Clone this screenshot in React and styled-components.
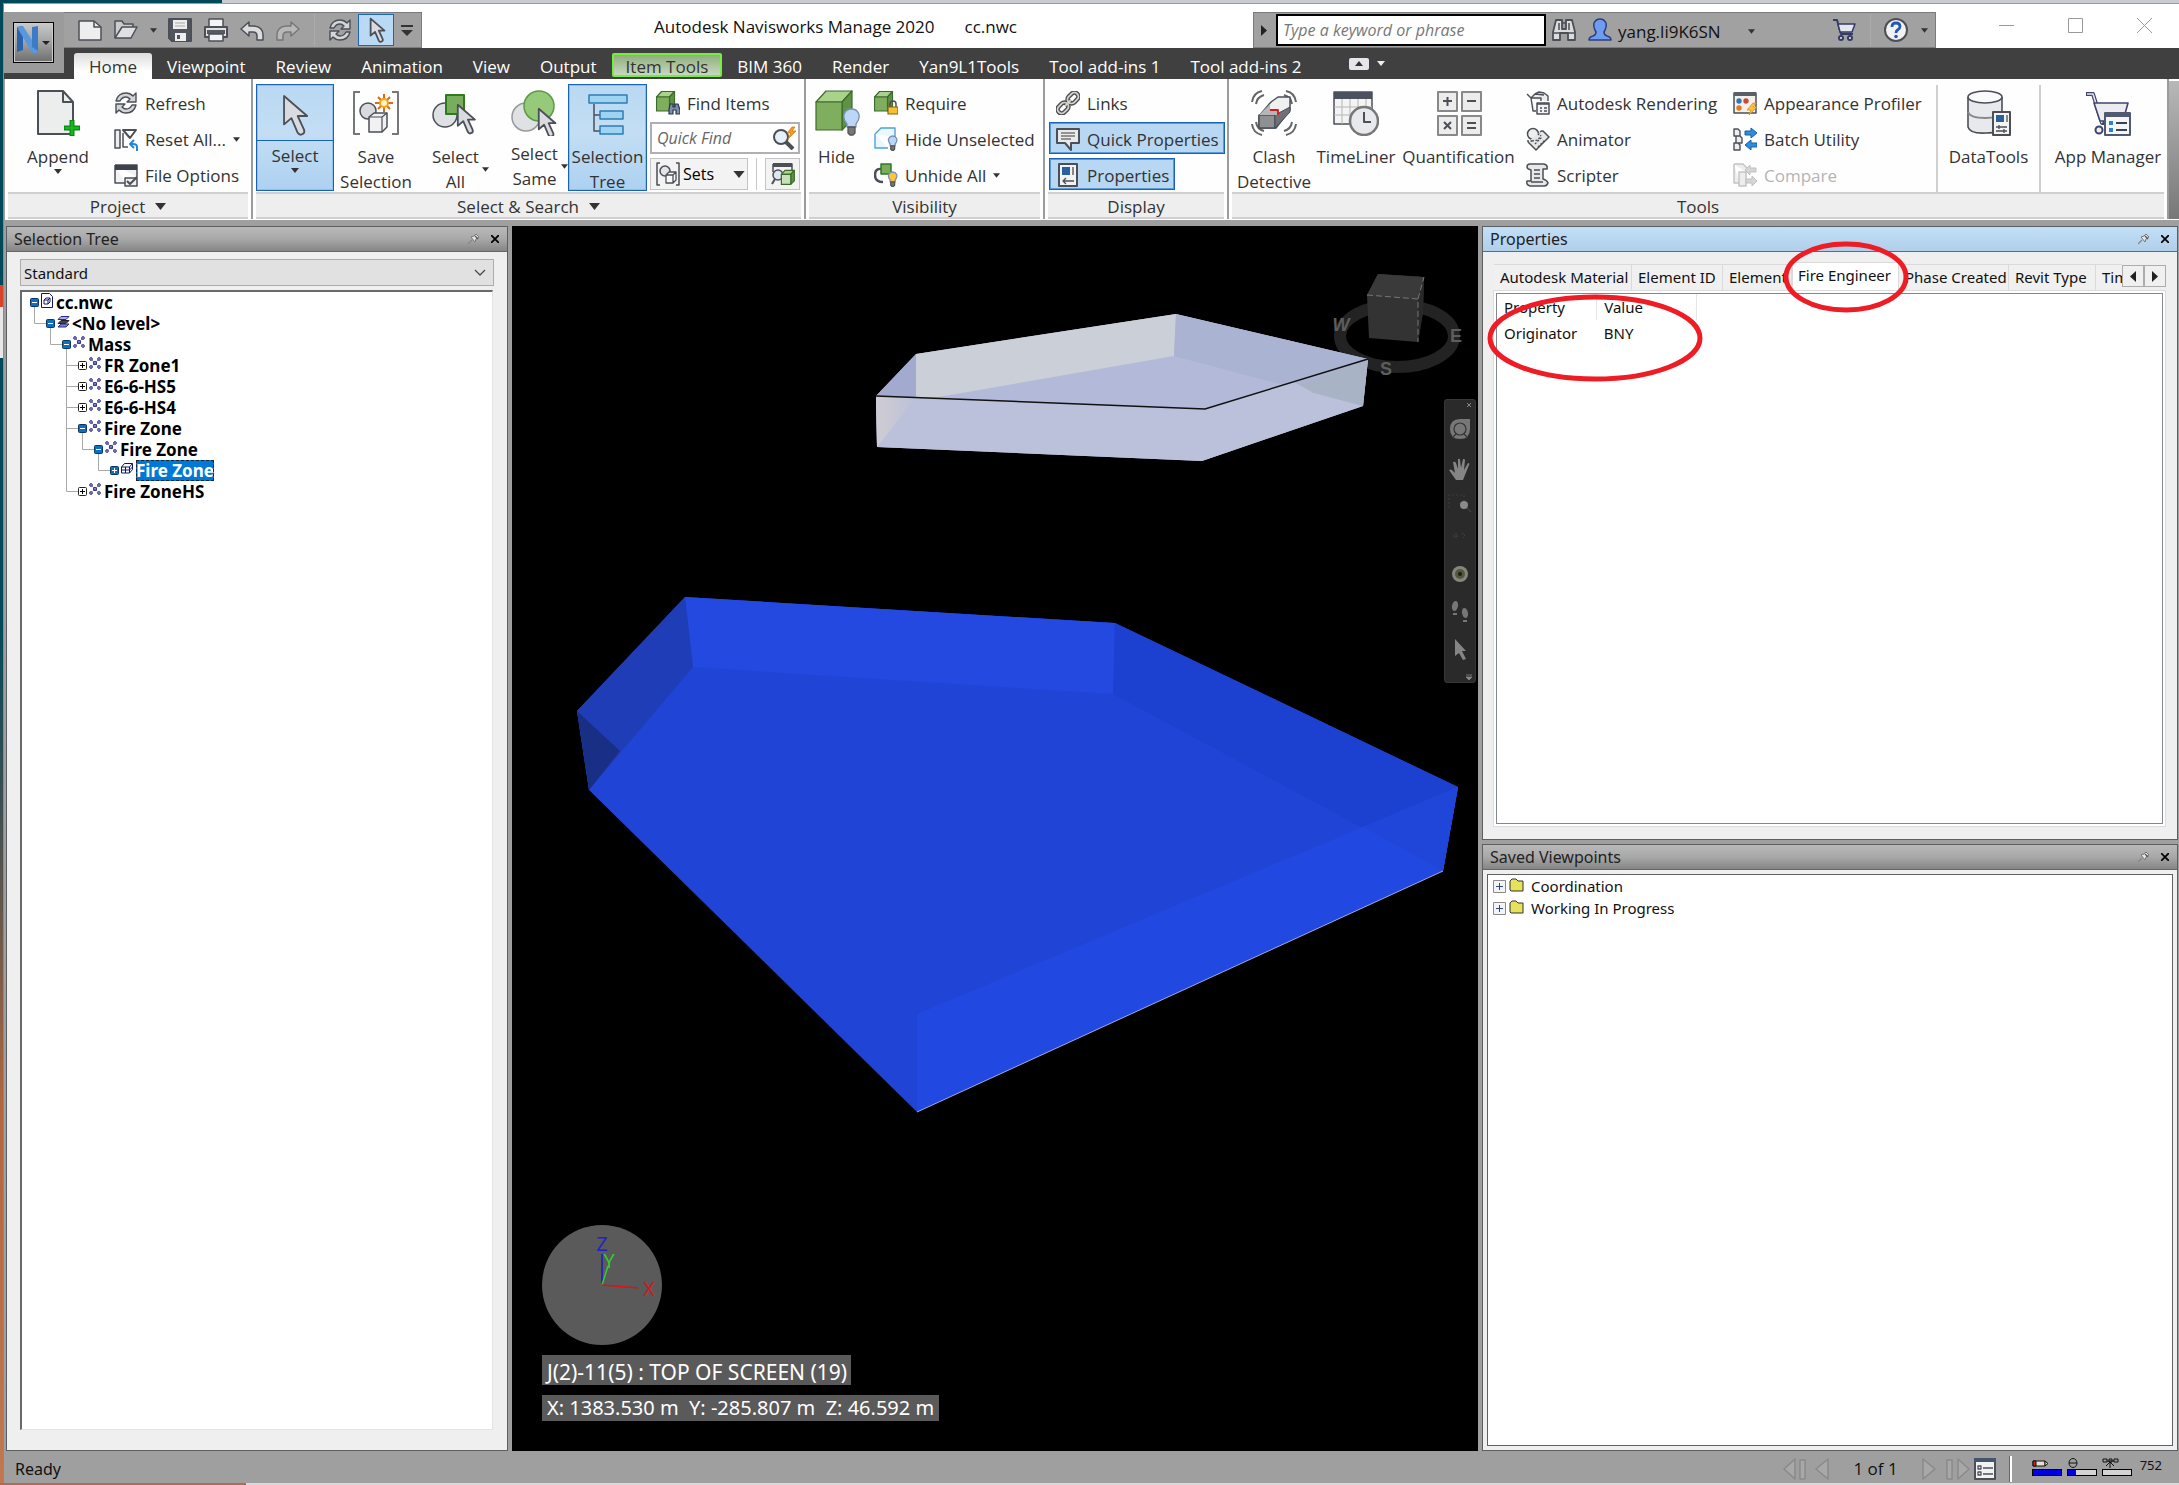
import React from 'react';
import styled, { createGlobalStyle, css } from 'styled-components';

const GlobalStyle = createGlobalStyle`
  * {
    box-sizing: border-box;
  }
  body {
    margin: 0;
    background: #9f9f9f;
    overflow: hidden;
  }
  button, input, select {
    font: inherit;
    color: inherit;
  }
  button {
    padding: 0;
    border: none;
    background: none;
    cursor: pointer;
  }
  svg {
    display: block;
    flex: none;
  }
`;

const uiFont = '"Open Sans", "Noto Sans", sans-serif';
const panelFont = '"Noto Sans", "Open Sans", sans-serif';

/* ---------- window ---------- */

const Desktop = styled.div`
  display: flex;
  flex-direction: column;
  height: 100vh;
  padding: 0 0 2px 3px;
  background:
    linear-gradient(90deg, #00495a 0 222px, #c9cdd2 222px) top / 100% 3px no-repeat,
    linear-gradient(90deg, #b06c50 0 246px, #dadada 246px) bottom / 100% 2px no-repeat,
    linear-gradient(180deg, #00495a 0 285px, #d8432a 285px 307px, #e8e8e8 307px 358px, #00495a 358px 620px, #3a4f52 800px, #b0663f 1100px, #c07850) left / 3px 100% no-repeat;
  font-family: ${uiFont};
  font-size: 17px;
  color: #333;
`;

const Window = styled.div`
  flex: 1;
  min-height: 0;
  display: flex;
  flex-direction: column;
  margin-top: 3px;
  border-top: 1px solid #9a9a9a;
  border-left: 1px solid #8a8a8a;
  background: #9f9f9f;
`;

const Header = styled.header`
  flex: none;
  display: grid;
  grid-template-columns: 60px 1fr;
  grid-template-rows: 44px 31px;
  background: linear-gradient(#fff 44px, #404040 44px);
`;

const AppCorner = styled.div`
  grid-row: 1 / 3;
  display: flex;
  align-items: center;
  justify-content: center;
  margin: 8px 0 6px;
  padding-right: 2px;
  background: #9b9b9b;
`;

const AppButton = styled.button`
  display: flex;
  align-items: flex-start;
  justify-content: center;
  width: 41px;
  height: 41px;
  padding-top: 2px;
  border: 1px solid #000;
  background: linear-gradient(#c9c9c9, #a2a2a2 50%, #6e6e6e);
  box-shadow: inset 0 0 0 1px #ccc;
`;

const TitleRow = styled.div`
  display: flex;
  align-items: stretch;
`;

const ToolStrip = styled.div`
  display: flex;
  align-items: stretch;
  margin-top: 8px;
  border: 1px solid #7b7b7b;
  border-left-width: ${(p) => (p.$open ? 0 : '1px')};
  background: #a1a1a1;
  padding: 1px 1px 1px ${(p) => (p.$open ? '8px' : 0)};
`;

const IconButton = styled.button`
  display: flex;
  align-items: center;
  justify-content: center;
  width: ${(p) => p.$w || 36}px;
  ${(p) =>
    p.$active &&
    css`
      border: 1px solid #1a66b8;
      background: #b9d9f5;
    `}
`;

const ThinSep = styled.span`
  width: 16px;
  background: linear-gradient(90deg, transparent 8px, #acacac 8px 9px, transparent 9px);
`;

const Title = styled.h1`
  flex: 1;
  display: flex;
  justify-content: center;
  gap: 30px;
  margin: 0;
  padding-right: 4px;
  font-size: 17px;
  font-weight: 400;
  line-height: 46px;
  color: #111;
  white-space: nowrap;
`;

const SearchInput = styled.input`
  width: 270px;
  margin: 0 0 0 3px;
  padding: 0 5px;
  border: 2px solid #000;
  border-radius: 0;
  background: #fff;
  font-size: 16px;
  font-style: italic;
  outline: none;
  &::placeholder {
    color: #777;
    opacity: 1;
  }
`;

const UserButton = styled.button`
  display: flex;
  align-items: center;
  justify-content: space-between;
  width: 142px;
  padding: 2px 5px 0 0;
  color: #111;
`;

const Spacer = styled.span`
  flex: ${(p) => (p.$w ? `0 0 ${p.$w}px` : 1)};
`;

const WindowControls = styled.div`
  display: flex;
  margin-left: 36px;
`;

const WinButton = styled.button`
  display: flex;
  align-items: center;
  justify-content: center;
  width: 69px;
`;

const TabRow = styled.nav`
  display: flex;
  align-items: flex-end;
  padding-left: 10px;
`;

const RibbonTab = styled.button`
  height: 26px;
  padding: 0 15px;
  color: #fff;
  line-height: 28px;
  white-space: nowrap;
  ${(p) =>
    p.$active &&
    css`
      border-radius: 3px 3px 0 0;
      background: linear-gradient(#dcdcdc, #fff 70%);
      color: #333;
    `}
  ${(p) =>
    p.$context &&
    css`
      height: 24px;
      line-height: 24px;
      margin-bottom: 2px;
      padding: 0 12px;
      border: 2px solid #76ee3f;
      border-radius: 2px;
      background: linear-gradient(#8fae7d, #c8d8be);
      color: #333;
    `}
`;

const MinimizeRibbon = styled.button`
  display: flex;
  align-items: center;
  gap: 8px;
  align-self: center;
  margin: 0 0 0 32px;
`;

/* ---------- ribbon ---------- */

const Ribbon = styled.section`
  flex: none;
  display: flex;
  height: 141px;
  margin-left: 1px;
  padding-bottom: 1px;
  background: #fefefe;
`;

const Group = styled.div`
  flex: ${(p) => (p.$w ? `0 0 ${p.$w}px` : '1 1 0')};
  min-width: 0;
  display: flex;
  flex-direction: column;
  border-right: 2px solid #9b9b9b;
`;

const GroupBody = styled.div`
  display: flex;
  height: 113px;
  padding: 5px 0 0 ${(p) => p.$pad || 0}px;
  > * {
    flex-shrink: 0;
  }
`;

const GroupTitle = styled.div`
  display: flex;
  align-items: center;
  justify-content: center;
  gap: 10px;
  height: 27px;
  margin: 0 3px;
  padding-top: 2px;
  border-top: 2px solid #cfcfcf;
  border-bottom: 2px solid #cfcfcf;
  background: #eee;
`;

const BigButton = styled.button`
  display: flex;
  flex-direction: column;
  align-items: ${(p) => (p.$left ? 'flex-start' : 'center')};
  width: ${(p) => p.$w}px;
  height: 107px;
  padding: ${(p) => (p.$active ? 5 : 6)}px 0 0 ${(p) => p.$left || 0}px;
  white-space: nowrap;
  ${(p) =>
    p.$active &&
    css`
      border: 1px solid #1a62b3;
      box-shadow: inset 0 0 0 1px #8fbfea;
      background: linear-gradient(#b9d8f2, #c3def4 45%, #add1f1);
    `}
`;

const IconBox = styled.span`
  display: flex;
  align-items: center;
  justify-content: center;
  width: ${(p) => (p.$split ? '100%' : '46px')};
  height: ${(p) => (p.$split ? 51 : 46)}px;
  margin-bottom: ${(p) => (p.$split ? 2 : p.$tight ? 5 : 8)}px;
  border-bottom: ${(p) => (p.$split ? '1px solid #1a62b3' : 'none')};
`;

const LabelRow = styled.span`
  display: flex;
  align-items: center;
  gap: 3px;
`;

const Label = styled.span`
  line-height: 25px;
  text-align: center;
`;

const SmallColumn = styled.div`
  display: flex;
  flex-direction: column;
  align-items: flex-start;
  gap: 4px;
  width: ${(p) => (p.$w ? `${p.$w}px` : 'auto')};
  padding-top: 2px;
`;

const SmallButton = styled.button`
  display: flex;
  align-items: center;
  gap: 7px;
  height: 32px;
  padding: 2px 5px 0 6px;
  border: 1px solid transparent;
  white-space: nowrap;
  color: ${(p) => (p.$dim ? '#b4b4b4' : 'inherit')};
  ${(p) =>
    p.$active &&
    css`
      border-color: #1a62b3;
      box-shadow: inset 0 0 0 1px #5b9bd8;
      background: #b7d7f3;
    `}
`;

const QuickFind = styled.label`
  display: flex;
  align-items: center;
  width: 150px;
  height: 32px;
  margin-left: 1px;
  padding: 0 2px 0 5px;
  border: 2px solid #aeb0b5;
  background: #fff;
  input {
    flex: 1;
    min-width: 0;
    padding: 0;
    border: none;
    outline: none;
    font-size: 16px;
    font-style: italic;
  }
  input::placeholder {
    color: #666;
    opacity: 1;
  }
`;

const SetsRow = styled.div`
  display: flex;
  align-items: center;
  margin-left: 1px;
  height: 32px;
`;

const SetsButton = styled.button`
  display: flex;
  align-items: center;
  gap: 3px;
  width: 98px;
  height: 32px;
  padding: 0 2px 0 5px;
  border: 1px solid #c4c4c4;
  background: #f3f3f3;
  font-size: 16px;
  color: #000;
`;

const SetsSep = styled.span`
  width: 1px;
  height: 32px;
  margin: 0 8px;
  background: #c8c8c8;
`;

const BoxButton = styled.button`
  display: flex;
  align-items: center;
  justify-content: center;
  width: 35px;
  height: 32px;
  border: 1px solid #c4c4c4;
  background: #f3f3f3;
`;

const ToolSep = styled.span`
  width: 2px;
  height: 107px;
  margin-top: 1px;
  background: #d0d0d0;
`;

const RibbonScroll = styled.div`
  width: 10px;
  margin-top: 2px;
  background: linear-gradient(#b8b8b8, #777);
`;

/* ---------- docked panels ---------- */

const Workspace = styled.main`
  flex: 1;
  min-height: 0;
  display: grid;
  grid-template-columns: 502px minmax(0, 1fr) 696px;
  gap: 4px;
  padding: 6px 1px 0 2px;
`;

const RightDock = styled.div`
  display: flex;
  flex-direction: column;
  gap: 4px;
  min-height: 0;
`;

const Panel = styled.section`
  position: relative;
  flex: ${(p) => p.$flex || '1 1 0'};
  min-height: 0;
  display: flex;
  flex-direction: column;
  border: 1px solid #5c5f61;
  background: #efefef;
  font-family: ${panelFont};
  font-size: 15px;
  color: #111;
`;

const PanelHeader = styled.header`
  flex: none;
  display: flex;
  align-items: center;
  gap: 12px;
  height: 25px;
  padding: 0 8px 0 7px;
  border-bottom: 1px solid ${(p) => (p.$active ? '#4a708f' : '#666')};
  background: ${(p) => (p.$active ? 'linear-gradient(#c3dff8, #b0cfea)' : 'linear-gradient(#b9b9b9, #a8a8a8 50%, #858585)')};
  h2 {
    flex: 1;
    margin: 0;
    font-size: 16px;
    font-weight: 400;
    line-height: 24px;
    color: #222;
  }
`;

const ComboWrap = styled.label`
  flex: none;
  display: grid;
  align-items: center;
  height: 27px;
  margin: 7px 13px 4px;
  border: 1px solid #acacac;
  background: #e1e1e1;
  > * {
    grid-area: 1 / 1;
  }
  svg {
    justify-self: end;
    margin-right: 7px;
    pointer-events: none;
  }
`;

const Combo = styled.select`
  width: 100%;
  height: 100%;
  padding: 0 3px;
  border: none;
  background: none;
  appearance: none;
  outline: none;
`;

const TreeBox = styled.ul`
  flex: 1;
  margin: 0 14px 20px 13px;
  padding: 0 0 0 5px;
  border: 1px solid #e3e3e3;
  border-top: 2px solid #696969;
  border-left: 2px solid #696969;
  background: #fff;
  list-style: none;
  font-size: 17px;
  font-weight: 700;
  color: #000;
`;

const TreeRow = styled.li`
  display: flex;
  height: 21px;
  white-space: nowrap;
`;

const TreeText = styled.span`
  height: 21px;
  margin-left: 2px;
  line-height: 22px;
  ${(p) =>
    p.$selected &&
    css`
      outline: 1px dashed #222;
      outline-offset: -1px;
      background: #0078d7;
      color: #fff;
    `}
`;

const Viewport = styled.section`
  position: relative;
  min-width: 0;
  min-height: 0;
  background: #000;
  overflow: hidden;
`;

const Hud = styled.div`
  position: absolute;
  left: 30px;
  bottom: 30px;
  display: flex;
  flex-direction: column;
  align-items: flex-start;
  gap: 10px;
  font-family: ${panelFont};
  font-size: 20px;
  color: #fff;
`;

const HudLabel = styled.div`
  padding: ${(p) => (p.$large ? '4px 4px 0 5px' : '0 5px')};
  background: #5a5a5a;
  font-size: ${(p) => (p.$large ? 21 : 20)}px;
  line-height: 26px;
  white-space: pre;
`;

const NavBar = styled.div`
  position: absolute;
  right: 2px;
  top: 173px;
  display: flex;
  flex-direction: column;
  align-items: center;
  width: 32px;
  height: 284px;
  border: 1px solid #383838;
  border-radius: 3px;
  background: #2a2a2a;
`;

const NavButton = styled.button`
  display: flex;
  align-items: center;
  justify-content: center;
  width: 30px;
  height: ${(p) => p.$h}px;
`;

const NavCorner = styled.button`
  align-self: flex-end;
  height: 11px;
  padding-right: 2px;
`;

const Tabs = styled.div`
  display: flex;
  align-items: flex-end;
  height: 28px;
  margin: 10px 11px 0 11px;
`;

const TabScroller = styled.div`
  flex: 1;
  min-width: 0;
  display: flex;
  align-items: flex-end;
  overflow: hidden;
`;

const PropTab = styled.button`
  flex: none;
  width: ${(p) => p.$w}px;
  height: ${(p) => (p.$active ? 28 : 26)}px;
  padding: ${(p) => (p.$active ? '0 0 4px 5px' : '0 0 2px 6px')};
  border: 1px solid #dadada;
  border-bottom: none;
  border-left-width: ${(p) => (p.$active ? '1px' : 0)};
  background: ${(p) => (p.$active ? '#fff' : '#f0f0f0')};
  text-align: left;
  white-space: nowrap;
  overflow: hidden;
`;

const TabArrow = styled.button`
  display: flex;
  align-items: center;
  justify-content: center;
  align-self: center;
  width: 22px;
  height: 22px;
  border: 1px solid #acacac;
  background: #f0f0f0;
`;

const PropPage = styled.div`
  flex: 1;
  margin: 0 11px 12px 10px;
  padding: 2px;
  border: 1px solid #dcdcdc;
  background: #fff;
`;

const PropList = styled.div`
  height: 100%;
  border: 1px solid #828790;
`;

const PropTable = styled.table`
  border-collapse: collapse;
  table-layout: fixed;
  width: 200px;
  th, td {
    height: 25px;
    padding: 0 0 0 7px;
    font-weight: 400;
    text-align: left;
    white-space: nowrap;
  }
  th {
    height: 26px;
    border-right: 1px solid #e5e5e5;
  }
`;

const Annotation = styled.svg`
  position: absolute;
  left: 0;
  top: 0;
  overflow: visible;
  pointer-events: none;
`;

const ViewpointList = styled.ul`
  flex: 1;
  margin: 4px;
  padding: 0 0 0 5px;
  border: 1px solid #5f6265;
  background: #fff;
  list-style: none;
`;

const ViewpointRow = styled.li`
  display: flex;
  align-items: center;
  gap: 7px;
  height: 22px;
`;

/* ---------- status bar ---------- */

const StatusBar = styled.footer`
  flex: none;
  display: flex;
  align-items: center;
  height: 32px;
  padding: 3px 17px 0 11px;
  font-family: ${panelFont};
  font-size: 16px;
  color: #111;
`;

const SheetNav = styled.div`
  display: flex;
  align-items: center;
  font-family: ${uiFont};
  font-size: 17px;
`;

const SheetCount = styled.span`
  margin: 0 24px;
`;

const StatusSep = styled.span`
  width: 3px;
  height: 26px;
  margin: 0 20px 0 13px;
  border-left: 1px solid #666;
  border-right: 2px solid #fff;
`;

const Meters = styled.div`
  display: flex;
  gap: 5px;
`;

const MeterBox = styled.div`
  display: flex;
  flex-direction: column;
  align-items: flex-start;
  height: 22px;
`;

const MeterTrack = styled.div`
  width: 30px;
  height: 7px;
  border: 1px solid #000;
  background: #d4d4d4;
`;

const MeterFill = styled.div`
  height: 5px;
  background: #0000e0;
`;

const Memory = styled.span`
  margin: 0 0 8px 8px;
  font-size: 13px;
`;

/* ---------- icons ---------- */

const INK = '#4b4f57';

const S = ({ children, w = 24, h = w, box = `0 0 ${w} ${h}` }) => (
  <svg width={w} height={h} viewBox={box} fill="none" stroke={INK} strokeWidth="2" strokeLinejoin="round">
    {children}
  </svg>
);

const Caret = ({ w = 8, color = '#333' }) => (
  <svg width={w} height={Math.ceil(w / 2) + 1} viewBox="0 0 8 5">
    <path d="M0 0h8L4 5z" fill={color} />
  </svg>
);

const SideCaret = ({ left }) => (
  <svg width="6" height="11" viewBox="0 0 6 11">
    <path d={left ? 'M6 0v11L0 5.5z' : 'M0 0v11l6-5.5z'} fill="#222" />
  </svg>
);

const Arrow = ({ x = 0, y = 0, s = 1, fill = '#dadbe0' }) => (
  <g transform={`translate(${x} ${y}) scale(${s})`}>
    <path d="M1 1v27l7-6 6 14q2 3 5 1 2-1 1-4l-6-13h9z" fill={fill} strokeWidth={1.8 / s} />
  </g>
);

const Cube = ({ x = 0, y = 0, s = 1, fill = '#7fae5f', top = '#a9d38c', side = '#5f9244', line = '#3d6b2b' }) => (
  <g transform={`translate(${x} ${y}) scale(${s})`} stroke={line} strokeWidth={1.2 / s}>
    <path d="M1 12L11 1h26L27 12z" fill={top} />
    <path d="M27 12L37 1v29L27 40z" fill={side} />
    <path d="M1 12h26v28H1z" fill={fill} />
  </g>
);

const Bulb = ({ x, y, s = 1, fill = '#bcd6f5' }) => (
  <g transform={`translate(${x} ${y}) scale(${s})`} strokeWidth={1.3 / s}>
    <path d="M4 15C-3 6 3 0 8.500 0S20 6 13 15v3H4z" fill={fill} stroke="#7a91b5" />
    <path d="M5 18h7v6l-2 2H7l-2-2z" fill="#777" stroke="#555" />
  </g>
);

const RefreshIcon = () => (
  <S>
    <path d="M2 10Q4 2 12 2q4 0 7 3l3-3v9h-9l3-3q-2-2-4-2-4 0-6 4zM22 14q-2 8-10 8-4 0-7-3l-3 3v-9h9l-3 3q2 2 4 2 4 0 6-4z" fill="#d3d5d9" strokeWidth="1.400" />
  </S>
);

const icons = {
  newFile: (
    <S><path d="M1 3h15l7 6v13H1z" fill="#eee" strokeWidth="1.500" /><path d="M16 3v6h7" strokeWidth="1.500" /></S>
  ),
  open: (
    <S><path d="M1 20V3h7l2 3h9v4" fill="#ccc" strokeWidth="1.500" /><path d="M1 20L8 9h15l-6 11z" fill="#dfe0e2" strokeWidth="1.500" /></S>
  ),
  save: (
    <S><path d="M1 1h22v22H4l-3-3z" fill="#52565f" /><path d="M5 2h14v9H5z" fill="#eee" stroke="none" /><path d="M7 5h10M7 8h10" stroke="#aaa" strokeWidth="1" /><path d="M7 15h11v8H7z" fill="#eee" stroke="none" /><path d="M9 17h3v4H9z" fill="#52565f" stroke="none" /></S>
  ),
  print: (
    <S><path d="M5 8V1h14v7" fill="#f4f4f4" strokeWidth="1.500" /><path d="M1 9h22v10H1z" fill="#e0e0e0" /><path d="M3 12h18v4H3z" fill="#555a63" stroke="none" /><path d="M5 16h14v7H5z" fill="#f4f4f4" strokeWidth="1.500" /></S>
  ),
  undo: (
    <S><path d="M1 11L9 4v4h5q9 1 9 9v5h-6v-4q0-4-4-4H9v4z" fill="#ddd" strokeWidth="1.500" /></S>
  ),
  redo: (
    <S><path d="M23 11l-8-7v4h-5q-9 1-9 9v5h6v-4q0-4 4-4h4v4z" fill="#b8b8b8" stroke="#777" strokeWidth="1.500" /></S>
  ),
  cursor: <S w={26} box="0 0 26 26"><Arrow x={7} y={1} s={0.63} /></S>,
  qatMore: (
    <S w={12} h={11}><path d="M0 1h12" stroke="#333" /><path d="M0 5h12l-6 6z" fill="#333" stroke="none" /></S>
  ),
  binoculars: (
    <S><path d="M4 2h6v9h4V2h6l3 12v8h-7v-7H8v7H1v-8z" fill="#dcdcdc" strokeWidth="1.800" /><path d="M1 15h8M15 15h8M10 5h4M7 5v7M17 5v7" strokeWidth="1.500" /></S>
  ),
  user: (
    <S><path d="M8 14Q5 9 6 5q2-4 6-4t6 4q1 4-2 9 0 3 3 4 4 1 4 4H1q0-3 4-4 3-1 3-4z" fill="#6f9bf0" stroke="#2b3f7f" strokeWidth="1.500" /></S>
  ),
  cart: (
    <S><path d="M1 2h4l4 14h12" stroke="#353a66" /><path d="M6 6h17l-3 8H8z" fill="#e4e6f0" stroke="#353a66" strokeWidth="1.500" /><circle cx="9" cy="20" r="2" fill="#eee" stroke="#353a66" /><circle cx="18" cy="20" r="2" fill="#eee" stroke="#353a66" /></S>
  ),
  help: (
    <S><circle cx="12" cy="12" r="11" fill="#f2f2f2" /><path d="M8 9q0-4 4-4t4 3.500q0 2-2.500 3.500-1.500 1-1.500 3" stroke="#2458b8" strokeWidth="2.800" /><circle cx="12" cy="18.500" r="1.800" fill="#2458b8" stroke="none" /></S>
  ),
  append: (
    <S w={46}>
      <path d="M3 1h25l10 11v32H3z" fill="#eceded" /><path d="M28 1v11h10" />
      <path d="M37 30v16M29 38h16" stroke="#0b8a12" strokeWidth="5" /><path d="M37 31v14M30 38h14" stroke="#19b522" strokeWidth="2.500" />
    </S>
  ),
  reset: (
    <S><path d="M1 3h5v18H1z" fill="#eee" strokeWidth="1.500" /><path d="M9 3h13l-6 8z" fill="#fff" /><path d="M9 6v14h5" strokeWidth="1.500" /><path d="M23 24v-4q0-3-4-3h-2M20 13l-4 4 4 4" stroke="#2585d9" /></S>
  ),
  fileOptions: (
    <S><path d="M1 2h22v12M1 2v18h10" fill="#f2f2f2" strokeWidth="1.500" /><path d="M1 2h22v5H1z" fill="#3d424c" stroke="none" /><path d="M11 15h12v8H11z" fill="#eee" strokeWidth="1.500" /><path d="M13 18l3 3 7-7" /></S>
  ),
  select: <S w={46}><Arrow x={11} y={3} s={1.05} /></S>,
  saveSelection: (
    <S w={46}>
      <path d="M7 2H1v42h6M39 2h6v42h-6" stroke="#777" />
      <circle cx="15" cy="21" r="8" fill="#d9dadd" strokeWidth="1.500" />
      <path d="M16 27l5-4h13v14l-5 5H16z" fill="#f1f1f3" strokeWidth="1.500" />
      <path d="M16 27h13v15M29 27l5-4" strokeWidth="1.200" />
      <path d="M31 4v18M22 13h18M25 7l12 12M37 7L25 19" stroke="#e06a10" /><circle cx="31" cy="13" r="4" fill="#fff3c0" stroke="#f2a020" />
    </S>
  ),
  selectAll: (
    <S w={46}>
      <circle cx="13" cy="25" r="12" fill="#dfe0e4" strokeWidth="1.500" />
      <path d="M14 5h18v19H14z" fill="#79ad5e" stroke="#2f7a1e" /><Arrow x={25} y={14} s={0.78} />
    </S>
  ),
  selectSame: (
    <S w={46}>
      <circle cx="15" cy="27" r="14" fill="#e0e1e4" stroke="#999" strokeWidth="1.500" />
      <circle cx="28" cy="16" r="15" fill="#97c97a" stroke="#5b9a45" strokeWidth="1.500" /><Arrow x={27} y={18} s={0.76} />
    </S>
  ),
  selectionTree: (
    <S w={46}>
      <path d="M9 14v27h6M9 25h6" strokeWidth="1.500" />
      <g fill="#9fd3f2" stroke="#2d7db8" strokeWidth="1.500"><path d="M4 5h38v8H4zM15 21h23v8H15zM15 36h23v8H15z" /></g>
    </S>
  ),
  findItems: (
    <S><Cube s={0.5} /><path d="M14 13h3v3h2v-3h3l2 6v4h-4v-4h-3v4h-4v-4z" fill="#7d8ea8" stroke="#27364f" strokeWidth="1.200" /></S>
  ),
  magnify: (
    <S><circle cx="9" cy="11" r="7" fill="#e6f0f8" /><path d="M14 16l7 7" strokeWidth="4" /><path d="M20 1l-5 6h4l-3 6 8-8h-4l3-4z" fill="#f59a23" stroke="#d97a10" strokeWidth="0.800" /></S>
  ),
  sets: (
    <S><path d="M4 1H1v22h3M20 1h3v22h-3" strokeWidth="1.500" /><circle cx="9" cy="9" r="5" fill="#e4e4e8" strokeWidth="1.500" /><path d="M10 13l3-3h7v8l-3 3h-7zM10 13h7v8M17 13l3-3" fill="#fafafa" strokeWidth="1.300" /></S>
  ),
  setsFind: (
    <S><path d="M2 2h19v8M2 2v8" strokeWidth="1.500" /><path d="M2 1h19v4H2z" fill="#4b4f57" stroke="none" /><circle cx="7" cy="13" r="5" fill="#dbe7f1" strokeWidth="1.500" /><path d="M4 17l-3 5" /><Cube x={10} y={8} s={0.36} fill="#c7e0ba" /></S>
  ),
  hide: <S w={46}><Cube x={1} /><Bulb x={29} y={19} /></S>,
  require: (
    <S><Cube s={0.5} /><path d="M16 16v-3q0-3 3-3t3 3v3" strokeWidth="1.500" /><path d="M14 16h10v7H14z" fill="#f5be35" stroke="#8a6410" strokeWidth="1.200" /></S>
  ),
  hideUnselected: (
    <S><path d="M1 7l6-6h14v9M1 7v14h13M1 7" fill="#ecf6fd" stroke="#4aa3dc" strokeWidth="1.400" /><Bulb x={14} y={9} s={0.55} /></S>
  ),
  unhideAll: (
    <S><path d="M9 19Q1 19 1 12t7-6" strokeWidth="2.500" /><path d="M7 1h10v10H7z" fill="#79ad5e" stroke="#2f7a1e" strokeWidth="1.500" /><Bulb x={14} y={9} s={0.55} fill="#ffc43a" /></S>
  ),
  links: (
    <S>
      <g transform="rotate(-45 12 12)" strokeWidth="4.500"><rect x="-1" y="8" width="12" height="8" rx="4" /><rect x="13" y="8" width="12" height="8" rx="4" /><path d="M8 12h8" /></g>
      <g transform="rotate(-45 12 12)" stroke="#d8d4c8" strokeWidth="1.800"><rect x="-1" y="8" width="12" height="8" rx="4" /><rect x="13" y="8" width="12" height="8" rx="4" /><path d="M8 12h8" /></g>
    </S>
  ),
  quickProps: (
    <S><path d="M1 2h22v14h-8v7l-6-7H1z" fill="#e9e9e9" /><path d="M5 6h14M5 9h14M5 12h10" stroke="#777" strokeWidth="1.300" /></S>
  ),
  props: (
    <S><path d="M3 1h18v22H3z" fill="#f3f3f3" /><path d="M6 4h8v8H6z" fill="#2c5f9e" stroke="none" /><path d="M17 4v8" stroke="#888" /><path d="M7 18h11M10 15l-3 3 3 3" strokeWidth="1.300" /></S>
  ),
  clash: (
    <S w={46}>
      <path d="M1 12Q2 3 11 1M5 14q1-7 8-9M45 12Q44 3 35 1M41 14q-1-7-8-9M1 34q1 9 10 11M5 32q1 7 8 9M45 34q-1 9-10 11M41 32q-1 7-8 9" stroke="#666" />
      <path d="M20 12l7-5h12v13L25 38H8V26z" fill="#f0f0f1" strokeWidth="1.500" />
      <path d="M8 25h16v13H8z" fill="#8e9094" strokeWidth="1.500" /><path d="M24 25l15-8v5L24 38z" fill="#6f7176" strokeWidth="1" />
      <path d="M8 25l11-11v6h8v5z" fill="#b5b6ba" stroke="none" /><path d="M19 20h8v5" stroke="#d11c1c" strokeWidth="1.800" />
    </S>
  ),
  timeliner: (
    <S w={46}>
      <path d="M1 2h38v32H1z" fill="#f4f4f4" strokeWidth="1.500" /><path d="M1 2h38v7H1z" fill="#4b515e" stroke="none" />
      <path d="M9 9v25M17 9v25M25 9v15M33 9v8M1 17h38M1 25h20" stroke="#b5b5b5" strokeWidth="1" />
      <circle cx="31" cy="31" r="14" fill="#e8e9ec" stroke="#777" strokeWidth="2.500" /><path d="M31 22v10h7" />
    </S>
  ),
  quantification: (
    <S w={46}>
      <path d="M2 2h19v19H2zM26 2h19v19H26zM2 26h19v19H2zM26 26h19v19H26z" fill="#ececec" stroke="#888" />
      <path d="M7 11h9M11.500 7v9M31 11h9M8 32l7 7M15 32l-7 7M31 33h9M31 38h9" />
    </S>
  ),
  rendering: (
    <S><path d="M5 7h10v3M5 7l2 13h3M1 3l4 4M5 7l4-4 4-2 5 1 4 3v5M9 3l9 1" fill="#ececec" strokeWidth="1.400" /><path d="M11 12h12v11H11z" fill="#f3f3f3" strokeWidth="1.500" /><path d="M11 13h12M14 17h2M18 17h3M14 20h2M18 20h3" strokeWidth="1.400" /></S>
  ),
  animator: (
    <S><circle cx="7" cy="7" r="5.500" fill="#eee" strokeWidth="1.500" /><path d="M15 4h2l6 6-13 13-8-8" fill="#e6e6e6" strokeWidth="1.500" /><path d="M1 14h5M12 8l3-4M6 14l6-1 3-5M9 17l7-7M12 20l7-7" strokeWidth="1.300" strokeDasharray="2 1.500" /></S>
  ),
  scripter: (
    <S><path d="M4 1h14q4 1 3 5h-4v10q4 1 5 4-1 3-4 3H4q-4-1-3-5h4V7Q1 6 1 4q0-3 3-3z" fill="#e8e8e8" strokeWidth="1.500" /><path d="M8 7h6M8 11h6M8 15h6M5 19h12" strokeWidth="1.400" /></S>
  ),
  profiler: (
    <S><path d="M1 2h22v20H1z" fill="#f5f0ea" strokeWidth="1.500" /><path d="M1 1h22v4H1z" fill="#5b5f68" stroke="none" /><g stroke="none"><circle cx="6" cy="10" r="2.700" fill="#2a78c0" /><circle cx="13" cy="10" r="2.700" fill="#c94a3b" /><circle cx="6" cy="17" r="2.700" fill="#e07a1f" /></g><path d="M20 12l-6 7h4l-2 5 8-8h-4l3-4z" fill="#ffc23a" stroke="#e08a10" strokeWidth="0.800" /></S>
  ),
  batch: (
    <S><path d="M1 2h4l2 2v5H1zM3 9h4l2 2v5H3zM1 16h4l2 2v5H1z" fill="#eee" strokeWidth="1.400" /><path d="M12 4h6V1l6 5-6 5V8h-6zM24 16h-6v-3l-6 5 6 5v-3h6z" fill="#2f8de0" stroke="#1b5fa5" strokeWidth="1" /></S>
  ),
  compare: (
    <S><path d="M1 1h9l4 4v5M1 1v19h5M6 9h7v14H6z" fill="#ededed" stroke="#c4c4c4" strokeWidth="1.500" /><path d="M23 5h-6V2l-5 5 5 5V9h6zM13 16h6v-3l5 5-5 5v-3h-6z" fill="#d5d5d5" stroke="#c0c0c0" strokeWidth="1" /></S>
  ),
  dataTools: (
    <S w={46}>
      <path d="M2 7v30q2 7 18 6 15 0 16-6V7" fill="#e8e9ec" strokeWidth="1.600" /><ellipse cx="19" cy="7" rx="17" ry="6" fill="#fafafa" strokeWidth="1.600" /><path d="M2 22q2 6 17 6t17-6" stroke="#888" />
      <path d="M27 22h17v23H27z" fill="#f3f3f3" /><path d="M30 25h8v7h-8z" fill="#2c5f9e" stroke="none" /><path d="M41 25v7" stroke="#888" /><path d="M30 37h11M30 41h11M33 35v4M38 39v4" strokeWidth="1.300" />
    </S>
  ),
  appManager: (
    <S w={46}>
      <path d="M1 4h7l9 29h4" stroke="#40446c" strokeWidth="4" /><path d="M2 4h6l9 29" stroke="#e9e9f2" strokeWidth="1.500" />
      <path d="M9 13h34l-5 18H15z" fill="#ececf0" stroke="#40446c" strokeWidth="1.600" /><circle cx="14" cy="40" r="3.500" fill="#eee" stroke="#40446c" />
      <path d="M20 23h25v22H20z" fill="#f6f6f6" stroke="#4f5a70" /><path d="M20 22h25v5H20z" fill="#4f5a70" stroke="none" />
      <path d="M24 31h4v4h-4zM24 38h4v4h-4z" fill="#2e84cc" stroke="none" /><path d="M31 33h11M31 40h11" stroke="#3a4150" />
    </S>
  ),
};

/* ---------- small drawings ---------- */

const Pin = () => (
  <S w={11} h={12}>
    <path d="M0 11l4-4" stroke="#888" strokeWidth="1.300" />
    <path d="M3 4l4 5 1-3 3-2-3-3-2 2z" fill="#e6e6e6" stroke="#777" strokeWidth="1" />
    <path d="M7 3l3 3" stroke="#555" strokeWidth="1.300" />
  </S>
);

const CloseX = () => (
  <S w={8} h={8}>
    <path d="M0 0l8 8M8 0L0 8" stroke="#000" strokeWidth="1.800" />
  </S>
);

const GUIDES = {
  blank: '',
  line: 'M7.500 0v21',
  tee: 'M7.500 0v21M7.500 10.500h9',
  elbow: 'M7.500 0v10.500h9',
};

const Guide = ({ kind }) => (
  <S w={16} h={21}>
    <path d={GUIDES[kind]} stroke="#a8a8a8" strokeWidth="1" />
  </S>
);

const Expander = ({ open, filled, child }) => (
  <S w={14} h={21}>
    {child && <path d="M0 10.500h4" stroke="#a8a8a8" strokeWidth="1" />}
    {open && <path d="M7.500 14v7" stroke="#a8a8a8" strokeWidth="1" />}
    <rect x="3.500" y="6.500" width="8" height="8" rx="1" fill={filled ? '#0b6fc2' : '#fff'} stroke={filled ? '#0a3763' : '#222'} strokeWidth="1" />
    <path d={open ? 'M5 10.500h5' : 'M5 10.500h5M7.500 8v5'} stroke={filled ? '#fff' : '#000'} strokeWidth="1" />
  </S>
);

const nodeGlyphs = {
  file: (
    <g stroke="#14146e" strokeWidth="1"><path d="M.5 1.500h8l3 3v11h-11z" fill="#fff" /><path d="M3 8l2-2h4v4l-2 2H3zM3 8h4v4M7 8l2-2" /></g>
  ),
  level: (
    <g strokeWidth="1"><path d="M4 3.500h8l-3 3H1z" fill="#a9aee8" stroke="#2a2a8a" /><path d="M4 7.500h8l-3 3H1z" fill="#444" stroke="#222" /><path d="M4 11h8l-3 3H1z" fill="#7a80d8" stroke="#2a2a8a" /></g>
  ),
  group: (
    <g fill="#9da5e8" stroke="#14146e" strokeWidth="0.800"><circle cx="2" cy="4" r="1.400" /><circle cx="10" cy="4" r="1.400" /><circle cx="6" cy="8" r="1.700" /><circle cx="2" cy="12" r="1.400" /><circle cx="10" cy="12" r="1.400" /><path d="M3 5l6 6M9 5l-6 6" strokeDasharray="1 1" /></g>
  ),
  solid: (
    <g stroke="#14146e" strokeWidth="1"><path d="M.5 7l3-3.500h8v6l-3 3.500h-8zM.5 7h8v6M8.500 7l3-3.500M4.500 7v6M.5 10h8l3-3" fill="#fff" /></g>
  ),
};

const Scene = () => (
  <svg width="966" height="1224" viewBox="0 0 966 1224">
    <defs>
      <linearGradient id="leftFace" x1="0" x2="1">
        <stop offset="0" stopColor="#cfccd2" />
        <stop offset="1" stopColor="#bcc1da" />
      </linearGradient>
    </defs>
    <g fill="none" stroke="#232323" strokeWidth="12">
      <ellipse cx="885" cy="110" rx="57" ry="31" />
    </g>
    <path d="M364 170L404 128 664 88 856 133 851 180 690 235 365 221z" fill="#b2b9d9" />
    <path d="M404 128L664 88 662 130 427 171 404 172z" fill="#cbcfd8" />
    <path d="M364 170L404 128V172z" fill="#a2abcf" />
    <path d="M664 88L856 133 851 180 662 130z" fill="#abb3d3" />
    <path d="M364 170L693 183 790 164 851 180 690 235 365 221z" fill="#bbc1da" />
    <path d="M782 161L856 133 851 180z" fill="#a8b3c5" />
    <path d="M693 183L782 156 800 166z" fill="#bbc1da" />
    <path d="M364 170L404 172 365 221z" fill="url(#leftFace)" />
    <path d="M364 170L693 183 856 133" fill="none" stroke="#111" strokeWidth="1.500" />

    <path d="M65 485L173 371 603 397 946 561 931 645 405 886 77 564z" fill="#2045d6" />
    <path d="M173 371L603 397 601 468 181 441z" fill="#2349e1" />
    <path d="M65 485L173 371 181 441 77 564z" fill="#1e3db6" />
    <path d="M65 485L108 525 77 564z" fill="#192f86" />
    <path d="M603 397L946 561 931 645 601 468z" fill="#1c41d0" />
    <path d="M405 788L946 561 931 645 405 886z" fill="#2148e0" />
    <path d="M946 561L931 645 851 601z" fill="#2046d9" />
    <path d="M931 645L405 886" stroke="#9aa9dd" strokeWidth="1" />

    <path d="M866 48L912 51 911 86 906 116 857 112 855 69z" fill="#333" />
    <path d="M866 48L912 51 906 73 855 69z" fill="#3a3a3a" />
    <path d="M912 51L911 86 906 116V73z" fill="#292929" />
    <path d="M855 69L906 73V116M906 73L912 51" fill="none" stroke="#777" strokeWidth="1" strokeDasharray="6 3" />
    <g fill="#5d5d5d" fontFamily="Liberation Sans, sans-serif" fontWeight="700" fontSize="18" textAnchor="middle">
      <text x="829" y="105" fontStyle="italic">W</text>
      <text x="944" y="116">E</text>
      <text x="874" y="149">S</text>
    </g>
  </svg>
);

const AxisTriad = () => (
  <svg width="120" height="120" viewBox="0 0 120 120" fill="none" strokeWidth="1.500">
    <circle cx="60" cy="60" r="60" fill="#5a5a5a" />
    <path d="M60 60V29" stroke="#2a2aa8" strokeWidth="2" />
    <path d="M60 60l6-19" stroke="#2fd02f" />
    <path d="M60 60l36 3" stroke="#d01818" />
    <g stroke="none" fontFamily="Open Sans, sans-serif" fontSize="20" textAnchor="middle">
      <text x="60" y="26" fill="#2222c8">Z</text>
      <text x="67" y="43" fill="#2fd02f">Y</text>
      <text x="107" y="71" fill="#d01818">X</text>
    </g>
  </svg>
);

const navIcons = [
  {
    name: 'Steering wheel',
    h: 36,
    shape: (
      <g>
        <path d="M2 12Q2 2 12 2h10v10q0 10-10 10T2 12z" fill="#777" stroke="none" />
        <g stroke="#333" strokeWidth="1.200"><circle cx="12" cy="12" r="6" /><path d="M8 17l-3 3M16 17l3 3" /></g>
      </g>
    ),
  },
  { name: 'Pan', h: 46, shape: <path d="M8 23L1 13q1-1 3 0l3 3L5 5q2-1 3 1l2 6V2q2-1 2 1l1 8 2-9q2 0 2 1l-1 10 4-7q2 0 1 2l-4 10-2 5z" fill="#858585" stroke="none" /> },
  {
    name: 'Zoom window',
    h: 28,
    shape: (
      <g stroke="#3c3c3c" strokeWidth="1">
        <path d="M1 14V1h15v6" strokeDasharray="2 2" />
        <path d="M19 14l4 4" strokeWidth="1.500" />
        <circle cx="16" cy="11" r="4" fill="#8a8a8a" stroke="none" />
      </g>
    ),
  },
  { name: 'Orbit', h: 34, shape: <path d="M5 12h6M8 9v6M14 9l3 2-2 3" stroke="#414141" strokeWidth="1" strokeDasharray="2 1" /> },
  {
    name: 'Look around',
    h: 42,
    shape: (
      <g stroke="none">
        <circle cx="12" cy="12" r="8" fill="#85867c" />
        <circle cx="12" cy="12" r="5" fill="#53583c" />
        <circle cx="12" cy="12" r="2" fill="#1c1c1c" />
      </g>
    ),
  },
  {
    name: 'Walk',
    h: 36,
    shape: (
      <g fill="#777" stroke="none">
        <ellipse cx="7" cy="6" rx="3" ry="5" transform="rotate(12 7 6)" />
        <ellipse cx="17" cy="13" rx="3" ry="5" transform="rotate(-12 17 13)" />
        <path d="M5 13h4v2H5zM15 20h4v2h-4z" />
      </g>
    ),
  },
  { name: 'Select', h: 42, shape: <path d="M7 1v17l4-3 4 7 3-1-4-8h4z" fill="#858585" stroke="none" /> },
];

/* ---------- data ---------- */

const ribbonTabs = ['Home', 'Viewpoint', 'Review', 'Animation', 'View', 'Output', 'Item Tools', 'BIM 360', 'Render', 'Yan9L1Tools', 'Tool add-ins 1', 'Tool add-ins 2'];

const treeRows = [
  { guides: [], icon: 'file', text: 'cc.nwc', open: true, filled: true },
  { guides: ['elbow'], icon: 'level', text: '<No level>', open: true, filled: true },
  { guides: ['blank', 'elbow'], icon: 'group', text: 'Mass', open: true, filled: true },
  { guides: ['blank', 'blank', 'tee'], icon: 'group', text: 'FR Zone1' },
  { guides: ['blank', 'blank', 'tee'], icon: 'group', text: 'E6-6-HS5' },
  { guides: ['blank', 'blank', 'tee'], icon: 'group', text: 'E6-6-HS4' },
  { guides: ['blank', 'blank', 'tee'], icon: 'group', text: 'Fire Zone', open: true, filled: true },
  { guides: ['blank', 'blank', 'line', 'elbow'], icon: 'group', text: 'Fire Zone', open: true, filled: true },
  { guides: ['blank', 'blank', 'line', 'blank', 'elbow'], icon: 'solid', text: 'Fire Zone', filled: true, selected: true },
  { guides: ['blank', 'blank', 'elbow'], icon: 'group', text: 'Fire ZoneHS' },
];

const propTabs = [
  { text: 'Autodesk Material', w: 138 },
  { text: 'Element ID', w: 91 },
  { text: 'Element', w: 69 },
  { text: 'Fire Engineer', w: 107, active: true },
  { text: 'Phase Created', w: 110 },
  { text: 'Revit Type', w: 87 },
  { text: 'TimeLiner', w: 80 },
];

const meters = [
  { name: 'Pencil', fill: 100, icon: <g><path d="M1 3h12v5H1z" fill="#e8e0d0" /><path d="M1 3h3v5H1z" fill="#c22" /><path d="M13 3l3 2.500L13 8z" fill="#fd4" /></g> },
  { name: 'Disk', fill: 28, icon: <g><ellipse cx="6" cy="5" rx="4" ry="4.500" /><path d="M2 5h8" /></g> },
  { name: 'Web', fill: 0, icon: <path d="M1 1h4v3H1zM7 1h3v3H7zM12 1h4v3h-4zM5 3h7M4 8l4-4 4 4M8 4v6" /> },
];

/* ---------- components ---------- */

function Small({ icon, children, caret, ...rest }) {
  return (
    <SmallButton {...rest}>
      {icon}
      <span>{children}</span>
      {caret && <Caret w={7} />}
    </SmallButton>
  );
}

function Big({ icon, lines, caret, side, split, tight, ...rest }) {
  const label = (
    <Label>
      {lines.map((line, i) => (
        <React.Fragment key={line}>
          {i > 0 && <br />}
          {line}
        </React.Fragment>
      ))}
    </Label>
  );
  return (
    <BigButton {...rest}>
      <IconBox $split={split} $tight={tight}>{icon}</IconBox>
      {side ? <LabelRow>{label}<Caret w={7} /></LabelRow> : label}
      {caret && <Caret />}
    </BigButton>
  );
}

function PanelTitle({ children, active }) {
  return (
    <PanelHeader $active={active}>
      <h2>{children}</h2>
      <button aria-label="Auto hide"><Pin /></button>
      <button aria-label="Close"><CloseX /></button>
    </PanelHeader>
  );
}

function TitleBar() {
  return (
    <Header>
      <AppCorner>
        <AppButton aria-label="Application menu">
          <svg width="34" height="30" viewBox="0 0 34 30">
            <path d="M1 27V2l6-1v24z" fill="#2a62ad" />
            <path d="M1 2l6-1 14 22v5h-5z" fill="#5b98db" />
            <path d="M16 2l6-1v25l-6-4z" fill="#3c7bc8" />
            <path d="M26 16h8l-4 4z" fill="#222" />
          </svg>
        </AppButton>
      </AppCorner>
      <TitleRow>
        <ToolStrip $open>
          <IconButton aria-label="New">{icons.newFile}</IconButton>
          <IconButton aria-label="Open">{icons.open}</IconButton>
          <IconButton $w={18} aria-label="Open options"><Caret w={7} /></IconButton>
          <IconButton aria-label="Save">{icons.save}</IconButton>
          <IconButton aria-label="Print">{icons.print}</IconButton>
          <IconButton aria-label="Undo">{icons.undo}</IconButton>
          <IconButton aria-label="Redo">{icons.redo}</IconButton>
          <ThinSep />
          <IconButton aria-label="Refresh"><RefreshIcon /></IconButton>
          <IconButton $active aria-label="Select">{icons.cursor}</IconButton>
          <IconButton $w={26} aria-label="Customize">{icons.qatMore}</IconButton>
        </ToolStrip>
        <Title>
          <span>Autodesk Navisworks Manage 2020</span>
          <span>cc.nwc</span>
        </Title>
        <ToolStrip>
          <IconButton $w={19} aria-label="Collapse search"><SideCaret /></IconButton>
          <SearchInput aria-label="Search help" placeholder="Type a keyword or phrase" />
          <IconButton aria-label="Search">{icons.binoculars}</IconButton>
          <IconButton aria-label="Account">{icons.user}</IconButton>
          <UserButton>yang.li9K6SN <Caret w={7} /></UserButton>
          <Spacer $w={66} />
          <IconButton aria-label="App store">{icons.cart}</IconButton>
          <ThinSep />
          <IconButton aria-label="Help">{icons.help}</IconButton>
          <IconButton $w={20} aria-label="Help options"><Caret w={7} /></IconButton>
        </ToolStrip>
        <WindowControls>
          <WinButton aria-label="Minimize"><S w={16} h={16}><path d="M0 7.500h15" stroke="#999" strokeWidth="1" /></S></WinButton>
          <WinButton aria-label="Maximize"><S w={16} h={16}><path d="M.5.5h14v14H.5z" stroke="#999" strokeWidth="1" /></S></WinButton>
          <WinButton aria-label="Close window"><S w={16} h={16}><path d="M0 0l15 15M15 0L0 15" stroke="#999" strokeWidth="1" /></S></WinButton>
        </WindowControls>
      </TitleRow>
      <TabRow>
        {ribbonTabs.map((tab) => (
          <RibbonTab key={tab} $active={tab === 'Home'} $context={tab === 'Item Tools'}>{tab}</RibbonTab>
        ))}
        <MinimizeRibbon aria-label="Minimize ribbon">
          <svg width="20" height="12" viewBox="0 0 20 12">
            <rect width="20" height="12" rx="2" fill="#e6e6ea" />
            <path d="M6 8h8l-4-5z" fill="#333" />
          </svg>
          <Caret color="#eee" />
        </MinimizeRibbon>
      </TabRow>
    </Header>
  );
}

function RibbonPanel() {
  return (
    <Ribbon>
      <Group $w={248}>
        <GroupBody $pad={15}>
          <Big $w={76} icon={icons.append} lines={['Append']} caret />
          <Spacer $w={11} />
          <SmallColumn>
            <Small icon={<RefreshIcon />}>Refresh</Small>
            <Small icon={icons.reset} caret>Reset All...</Small>
            <Small icon={icons.fileOptions}>File Options</Small>
          </SmallColumn>
        </GroupBody>
        <GroupTitle>Project <Caret w={11} /></GroupTitle>
      </Group>
      <Group $w={553}>
        <GroupBody $pad={3}>
          <Big $w={78} $active split icon={icons.select} lines={['Select']} caret />
          <Big $w={84} icon={icons.saveSelection} lines={['Save', 'Selection']} />
          <Big $w={84} $left={14} side icon={icons.selectAll} lines={['Select', 'All']} />
          <Big $w={66} $left={9} side tight icon={icons.selectSame} lines={['Select', 'Same']} />
          <Big $w={79} $active icon={icons.selectionTree} lines={['Selection', 'Tree']} />
          <Spacer $w={2} />
          <SmallColumn>
            <Small icon={icons.findItems}>Find Items</Small>
            <QuickFind>
              <input aria-label="Quick Find" placeholder="Quick Find" />
              {icons.magnify}
            </QuickFind>
            <SetsRow>
              <SetsButton>{icons.sets}Sets<Spacer /><Caret w={12} /></SetsButton>
              <SetsSep />
              <BoxButton aria-label="Selection inspector">{icons.setsFind}</BoxButton>
            </SetsRow>
          </SmallColumn>
        </GroupBody>
        <GroupTitle>Select &amp; Search <Caret w={11} /></GroupTitle>
      </Group>
      <Group $w={239}>
        <GroupBody>
          <Big $w={61} icon={icons.hide} lines={['Hide']} />
          <SmallColumn>
            <Small icon={icons.require}>Require</Small>
            <Small icon={icons.hideUnselected}>Hide Unselected</Small>
            <Small icon={icons.unhideAll} caret>Unhide All</Small>
          </SmallColumn>
        </GroupBody>
        <GroupTitle>Visibility</GroupTitle>
      </Group>
      <Group $w={184}>
        <GroupBody $pad={4}>
          <SmallColumn>
            <Small icon={icons.links}>Links</Small>
            <Small $active icon={icons.quickProps}>Quick Properties</Small>
            <Small $active icon={icons.props}>Properties</Small>
          </SmallColumn>
        </GroupBody>
        <GroupTitle>Display</GroupTitle>
      </Group>
      <Group>
        <GroupBody $pad={5}>
          <Big $w={80} icon={icons.clash} lines={['Clash', 'Detective']} />
          <Big $w={84} icon={icons.timeliner} lines={['TimeLiner']} />
          <Big $w={121} icon={icons.quantification} lines={['Quantification']} />
          <SmallColumn $w={207}>
            <Small icon={icons.rendering}>Autodesk Rendering</Small>
            <Small icon={icons.animator}>Animator</Small>
            <Small icon={icons.scripter}>Scripter</Small>
          </SmallColumn>
          <SmallColumn $w={210}>
            <Small icon={icons.profiler}>Appearance Profiler</Small>
            <Small icon={icons.batch}>Batch Utility</Small>
            <Small $dim disabled icon={icons.compare}>Compare</Small>
          </SmallColumn>
          <ToolSep />
          <Big $w={101} icon={icons.dataTools} lines={['DataTools']} />
          <ToolSep />
          <Spacer $w={8} />
          <Big $w={118} icon={icons.appManager} lines={['App Manager']} />
        </GroupBody>
        <GroupTitle>Tools</GroupTitle>
      </Group>
      <RibbonScroll />
    </Ribbon>
  );
}

function SelectionTree() {
  return (
    <Panel>
      <PanelTitle>Selection Tree</PanelTitle>
      <ComboWrap>
        <Combo aria-label="Tree view">
          <option>Standard</option>
        </Combo>
        <S w={12} h={8}><path d="M1 1l5 5 5-5" stroke="#444" strokeWidth="1.200" /></S>
      </ComboWrap>
      <TreeBox>
        {treeRows.map((row, i) => (
          <TreeRow key={i}>
            {row.guides.map((kind, g) => <Guide key={g} kind={kind} />)}
            <Expander open={row.open} filled={row.filled} child={row.guides.length > 0} />
            <S w={13} h={21}>{nodeGlyphs[row.icon]}</S>
            <TreeText $selected={row.selected}>{row.text}</TreeText>
          </TreeRow>
        ))}
      </TreeBox>
    </Panel>
  );
}

function ModelView() {
  return (
    <Viewport>
      <Scene />
      <NavBar>
        <NavCorner aria-label="Close navigation bar">
          <S w={8} h={8}><path d="M2 2l4 4M6 2L2 6" stroke="#888" strokeWidth="1" /></S>
        </NavCorner>
        {navIcons.map((item) => (
          <NavButton key={item.name} $h={item.h} aria-label={item.name}>
            <S>{item.shape}</S>
          </NavButton>
        ))}
        <NavCorner aria-label="Customize navigation bar">
          <S w={8} h={8}><path d="M1 2h6M1 4h6L4 7z" fill="#888" stroke="#888" strokeWidth="0.800" /></S>
        </NavCorner>
      </NavBar>
      <Hud>
        <AxisTriad />
        <HudLabel $large>J(2)-11(5) : TOP OF SCREEN (19)</HudLabel>
        <HudLabel>{'X: 1383.530 m  Y: -285.807 m  Z: 46.592 m'}</HudLabel>
      </Hud>
    </Viewport>
  );
}

function Properties() {
  return (
    <Panel $flex="613 1 0">
      <PanelTitle active>Properties</PanelTitle>
      <Tabs>
        <TabScroller>
          {propTabs.map((tab) => (
            <PropTab key={tab.text} $w={tab.w} $active={tab.active}>{tab.text}</PropTab>
          ))}
        </TabScroller>
        <TabArrow aria-label="Previous tabs"><SideCaret left /></TabArrow>
        <TabArrow aria-label="Next tabs"><SideCaret /></TabArrow>
      </Tabs>
      <PropPage>
        <PropList>
          <PropTable>
            <thead>
              <tr><th>Property</th><th>Value</th></tr>
            </thead>
            <tbody>
              <tr><td>Originator</td><td>BNY</td></tr>
            </tbody>
          </PropTable>
        </PropList>
      </PropPage>
      <Annotation width="696" height="200" fill="none" stroke="#ee1c24" strokeWidth="5">
        <ellipse cx="112" cy="111" rx="105" ry="41" />
        <ellipse cx="363" cy="50" rx="60" ry="33" />
      </Annotation>
    </Panel>
  );
}

function SavedViewpoints() {
  return (
    <Panel $flex="607 1 0">
      <PanelTitle>Saved Viewpoints</PanelTitle>
      <ViewpointList>
        {['Coordination', 'Working In Progress'].map((name) => (
          <ViewpointRow key={name}>
            <S w={31} h={22}>
              <rect x=".5" y="5.500" width="12" height="12" fill="#f4f4f4" stroke="#8a8a8a" strokeWidth="1" />
              <path d="M3 11.500h7M6.500 8v7" stroke="#2b4a9b" strokeWidth="1" />
              <path d="M17 15V6l2-2h4l2 2h5v10H18z" fill="#e6e35a" stroke="#333" strokeWidth="1" />
            </S>
            {name}
          </ViewpointRow>
        ))}
      </ViewpointList>
    </Panel>
  );
}

function Status() {
  return (
    <StatusBar>
      Ready
      <Spacer />
      <SheetNav>
        <S w={46} h={24}>
          <g fill="#a8a8a8" stroke="#8a8a8a" strokeWidth="1.500"><path d="M12 2v20L1 12zM17 3h5v19h-5zM45 2v20L33 12z" /></g>
        </S>
        <SheetCount>1 of 1</SheetCount>
        <S w={48} h={24}>
          <g fill="#a8a8a8" stroke="#8a8a8a" strokeWidth="1.500"><path d="M1 2v20l12-10zM25 3h5v19h-5zM36 2v20l11-10z" /></g>
        </S>
        <Spacer $w={4} />
        <button aria-label="Sheet browser">
          <S w={22} h={22}>
            <path d="M1 1h20v20H1z" fill="#f2f2f2" />
            <path d="M0 0h22v4H0z" fill="#45556b" stroke="none" />
            <path d="M4 8h3v3H4zM4 14h3v3H4zM9 10h10M9 16h10" strokeWidth="1.300" />
          </S>
        </button>
      </SheetNav>
      <StatusSep />
      <Meters>
        {meters.map((m) => (
          <MeterBox key={m.name}>
            <svg width="17" height="11" viewBox="0 0 17 11" fill="none" stroke="#111" strokeWidth="1">{m.icon}</svg>
            <MeterTrack>
              <MeterFill style={{ width: `${m.fill}%` }} />
            </MeterTrack>
          </MeterBox>
        ))}
      </Meters>
      <Memory>752</Memory>
    </StatusBar>
  );
}

export default function App() {
  return (
    <Desktop>
      <GlobalStyle />
      <Window>
        <TitleBar />
        <RibbonPanel />
        <Workspace>
          <SelectionTree />
          <ModelView />
          <RightDock>
            <Properties />
            <SavedViewpoints />
          </RightDock>
        </Workspace>
        <Status />
      </Window>
    </Desktop>
  );
}
